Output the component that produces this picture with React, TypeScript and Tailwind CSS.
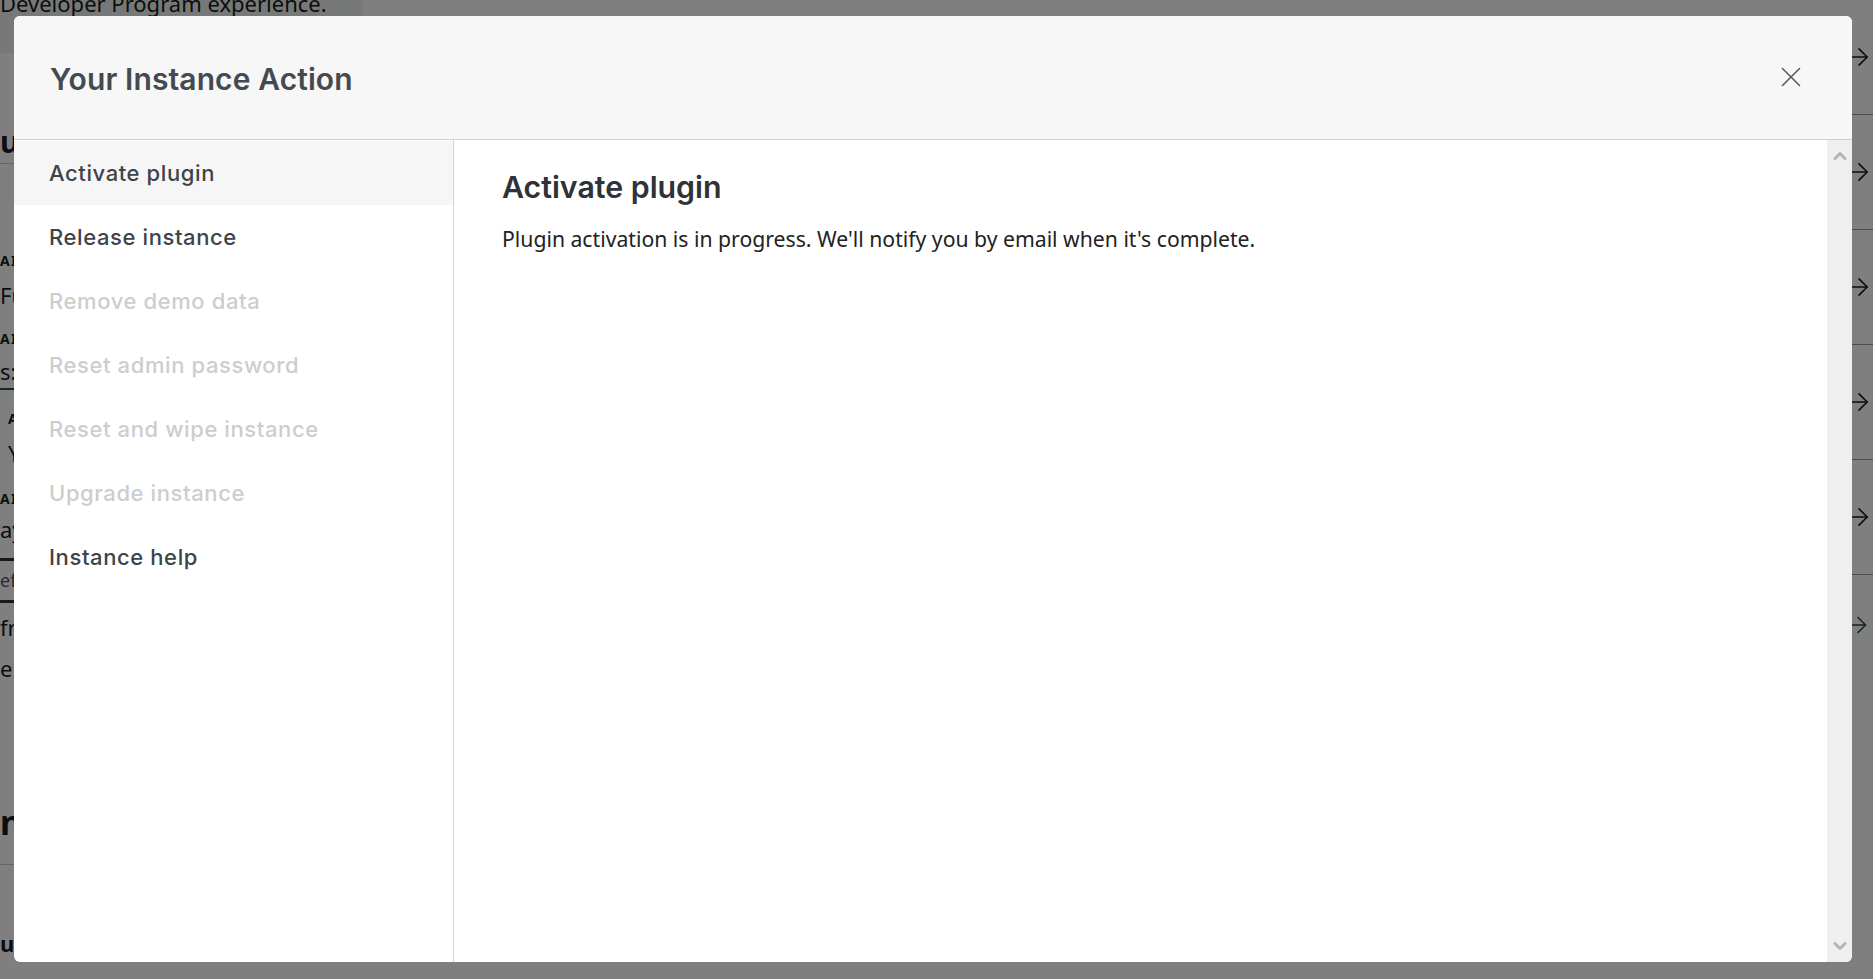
import { ArrowRight, X, ChevronUp, ChevronDown } from 'lucide-react'

type Action = {
  label: string
  active?: boolean
  disabled?: boolean
}

const actions: Action[] = [
  { label: 'Activate plugin', active: true },
  { label: 'Release instance' },
  { label: 'Remove demo data', disabled: true },
  { label: 'Reset admin password', disabled: true },
  { label: 'Reset and wipe instance', disabled: true },
  { label: 'Upgrade instance', disabled: true },
  { label: 'Instance help' },
]

// page that sits behind the dimmed overlay, only its edges show
function BackgroundPage() {
  return (
    <div className="flex h-full w-full bg-white text-[#1a1a1a] font-['Noto_Sans',sans-serif]">
      <div className="flex w-[400px] flex-col">
        <div className="h-[53px] w-[362px] bg-[#eef3f1]">
          <p className="-mt-[10px] whitespace-nowrap text-[22px] leading-[26px]">Developer Program experience.</p>
        </div>
        <p className="mt-[74px] text-[30px] font-bold leading-[30px]">u</p>
        <div className="mt-[6px] h-px w-[360px] bg-[#ccc]" />
        <p className="mt-[86px] text-[14px] font-bold tracking-widest">AI</p>
        <p className="mt-[8px] text-[22px]">Fu</p>
        <p className="mt-[16px] text-[14px] font-bold tracking-widest">AI</p>
        <p className="mt-[6px] w-[40px] border-b-2 border-[#2b5547] text-[22px]">s:</p>
        <p className="mt-[18px] pl-[8px] text-[14px] font-bold tracking-widest">A</p>
        <p className="mt-[8px] pl-[8px] text-[22px]">Y</p>
        <p className="mt-[18px] text-[14px] font-bold tracking-widest">AI</p>
        <p className="mt-[4px] text-[22px]">ay</p>
        <div className="mt-[12px] w-[200px] border-y-[3px] border-[#333] py-[6px] text-[18px] text-[#555]">ef</div>
        <p className="mt-[8px] text-[22px]">fr</p>
        <p className="mt-[8px] text-[22px]">e</p>
        <p className="mt-[112px] text-[34px] font-bold">nt</p>
        <div className="mt-[16px] h-px w-[360px] bg-[#ccc]" />
        <p className="mt-[62px] text-[22px] font-bold">ut</p>
      </div>
      <div className="flex-1" />
      <div className="flex w-[40px] flex-col">
        {[0, 1, 2, 3, 4].map((i) => (
          <div key={i} className="flex h-[115px] items-center border-b border-[#999] pl-[12px]">
            <ArrowRight className="h-[28px] w-[28px]" strokeWidth={1.4} />
          </div>
        ))}
        <div className="flex h-[100px] items-center pl-[12px]">
          <ArrowRight className="h-[26px] w-[26px] text-[#2b4a40]" strokeWidth={1.4} />
        </div>
      </div>
    </div>
  )
}

export default function App() {
  return (
    <div className="relative h-[979px] w-full overflow-hidden">
      <BackgroundPage />
      <div className="absolute inset-0 bg-black/50" />

      {/* --- Modal --- */}
      <div className="absolute left-[14px] top-[16px] flex h-[946px] w-[1838px] flex-col overflow-hidden rounded-[6px] bg-white">
        <div className="flex h-[124px] shrink-0 items-center justify-between border-b border-[#cfcfcf] bg-[#f7f7f7] pl-[36px] pr-[44px]">
          <h2 className="mt-[4px] font-['Inter',sans-serif] text-[30px] font-semibold tracking-[0.1px] text-[#454a50]">
            Your Instance Action
          </h2>
          <button className="-mt-[2px] text-[#4e5d5c]">
            <X className="h-[34px] w-[34px]" strokeWidth={1.1} />
          </button>
        </div>

        <div className="flex min-h-0 flex-1">
          <nav className="w-[440px] shrink-0 border-r border-[#d4d4d4] pt-[1px] font-['Inter',sans-serif]">
            {actions.map((a) => (
              <div
                key={a.label}
                className={
                  'flex h-[64px] items-center pl-[35px] text-[22px] font-medium tracking-[0.6px] ' +
                  (a.active ? 'bg-[#f6f6f6] ' : '') +
                  (a.disabled ? 'text-[#cdcdcd]' : 'text-[#3e434a]')
                }
              >
                {a.label}
              </div>
            ))}
          </nav>

          <div className="flex-1 pl-[48px] pt-[28px]">
            <h3 className="font-['Inter',sans-serif] text-[30.3px] font-semibold leading-[38px] text-[#2f3236]">
              Activate plugin
            </h3>
            <p className="mt-[19px] font-['Noto_Sans',sans-serif] text-[21.2px] leading-[28px] text-[#222]">
              Plugin activation is in progress. We'll notify you by email when it's complete.
            </p>
          </div>

          <div className="flex w-[25px] shrink-0 flex-col items-center justify-between bg-[#efefef] py-[6px] text-[#b4b4b4]">
            <ChevronUp className="h-[20px] w-[20px]" strokeWidth={3.5} />
            <ChevronDown className="h-[20px] w-[20px]" strokeWidth={3.5} />
          </div>
        </div>
      </div>
    </div>
  )
}
